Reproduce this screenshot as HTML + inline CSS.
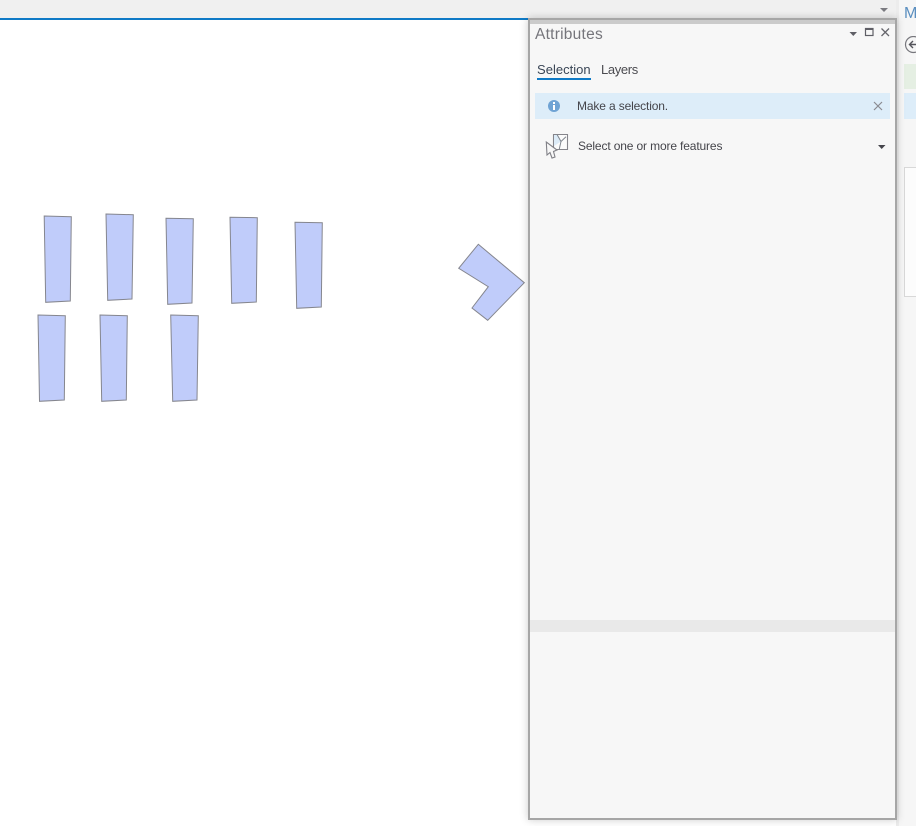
<!DOCTYPE html>
<html><head><meta charset="utf-8">
<style>
html,body{margin:0;padding:0;width:916px;height:826px;overflow:hidden;background:#fff;font-family:"Liberation Sans",sans-serif;}
.a{position:absolute;}
.t{position:absolute;white-space:nowrap;line-height:1;}
</style></head><body>
<div class="a" style="left:0;top:0;width:916px;height:18px;background:#f0f0f0"></div>
<div class="a" style="left:0;top:18px;width:529px;height:2px;background:#0f7ac6"></div>
<svg class="a" style="left:0;top:0" width="916" height="826">
<g fill="#c0ccfa" stroke="#85868e" stroke-width="1">
<polygon points="44.200,216 71.300,216.700 70.300,301 45.700,302.300"/>
<polygon points="106,214 133.300,214.700 132,299 107.700,300.300"/>
<polygon points="166,218.300 193.300,218.700 192,303 167.700,304.300"/>
<polygon points="230,217.300 257.300,217.700 256.300,302 231.700,303.300"/>
<polygon points="295,222.300 322.300,222.700 321.300,307 296.700,308.300"/>
<polygon points="38,315 65.300,315.700 64.300,400 39.500,401.300"/>
<polygon points="100,315 127.300,315.700 126.300,400 101.700,401.300"/>
<polygon points="170.700,315 198.300,315.700 197,400 172.700,401.300"/>
<polygon points="478.300,244.300 524.300,282.700 487.700,320.300 472,308 488.300,286.700 458.700,268.300"/>
</g>
<polygon points="880,8 888,8 884,12" fill="#7a7a80"/>
</svg>
<!-- right background panel -->
<div class="a" style="left:899px;top:0;width:17px;height:826px;background:#f6f6f6"></div>
<div class="a" style="left:896px;top:0;width:3px;height:826px;background:#ececec"></div>
<div class="a" style="left:904px;top:64px;width:12px;height:25px;background:#e5efe3"></div>
<div class="a" style="left:904px;top:93px;width:12px;height:26px;background:#ddedf9"></div>
<div class="a" style="left:904px;top:167px;width:12px;height:130px;background:#fcfcfc;border:1px solid #d8d8d8;border-right:0;box-sizing:border-box"></div>
<div class="t" style="left:904px;top:6px;font-size:16px;color:#5b8fc0">M</div>
<svg class="a" style="left:904px;top:36px" width="12" height="18"><circle cx="9.500" cy="8.500" r="8" fill="none" stroke="#77777d" stroke-width="1.200"/><path d="M12 8.500H6M9 5L5.500 8.500L9 12" fill="none" stroke="#55555c" stroke-width="1.400"/></svg>
<!-- panel -->
<div class="a" style="left:528px;top:18px;width:369px;height:802px;box-sizing:border-box;border:2px solid #a6a6a6;background:#f7f7f7;box-shadow:0 0 8px rgba(0,0,0,.2)"></div>
<div class="a" style="left:530px;top:20px;width:365px;height:4px;background:#cbcbcb"></div>
<div class="a" style="left:530px;top:620px;width:365px;height:12px;background:#e9e9e9"></div>
<div class="t" style="left:535px;top:27px;font-size:15.500px;color:#75757b;letter-spacing:.25px">Attributes</div>
<div class="t" style="left:537px;top:63px;font-size:13px;color:#3a4656;letter-spacing:.02px">Selection</div>
<div class="t" style="left:601px;top:63px;font-size:13px;color:#4b4b50;letter-spacing:-.35px">Layers</div>
<div class="a" style="left:537px;top:78px;width:54px;height:2px;background:#0f7ac6"></div>
<div class="a" style="left:535px;top:93px;width:355px;height:26px;background:#ddedf9"></div>
<div class="t" style="left:577px;top:100px;font-size:12px;color:#45454b;letter-spacing:-.14px">Make a selection.</div>
<div class="t" style="left:578px;top:140px;font-size:12px;color:#45454b;letter-spacing:-.14px">Select one or more features</div>
<svg class="a" style="left:0;top:0" width="916" height="826">
<circle cx="554" cy="106" r="6" fill="#6fa3d4"/>
<rect x="553" y="105" width="2" height="5" fill="#fff"/><rect x="553" y="102" width="2" height="2" fill="#fff"/>
<path d="M874 102L882 110M882 102L874 110" stroke="#8a8a90" stroke-width="1.200" fill="none"/>
<path d="M849.500 32H857L853.300 36Z" fill="#5f5f66"/>
<rect x="865.500" y="28.500" width="7.500" height="7" fill="none" stroke="#5f5f66" stroke-width="1.200"/><rect x="865" y="28" width="8.500" height="2" fill="#5f5f66"/>
<path d="M881.500 28.500L889 36M889 28.500L881.500 36" stroke="#66666c" stroke-width="1.300" fill="none"/>
<path d="M878 145H885.500L881.700 149Z" fill="#45454b"/>
<!-- select icon -->
<path d="M553.500 149.500V134.500H567.500V149.500Z" fill="#fbfbfb" stroke="#85858b" stroke-width="1.100"/>
<path d="M554 135H557.500L561 141.500L554 146Z" fill="#dcebf7"/>
<path d="M557 134.500L561 141.500L559.300 149M561 141.500L566 136.800" fill="none" stroke="#80868e" stroke-width="1"/>
<path d="M546.300 142L547 155L550 152.500L552 158L555 157L553.500 151.500L557 150Z" fill="#f7f7f7" stroke="#808086" stroke-width="1.100"/>
</svg>
</body></html>
